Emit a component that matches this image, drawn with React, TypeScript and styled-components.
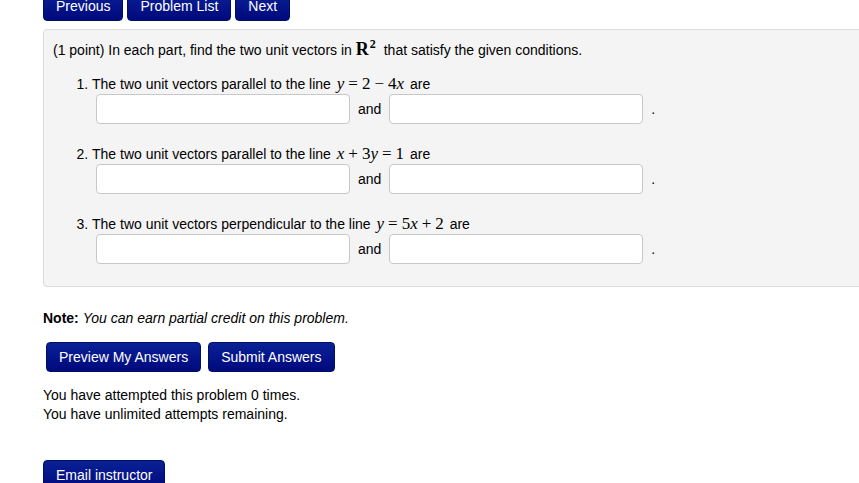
import React from 'react';
import styled, { createGlobalStyle } from 'styled-components';

const GlobalStyle = createGlobalStyle`
  html, body {
    margin: 0;
    padding: 0;
    background: #fff;
    overflow: hidden;
  }
  body {
    font-family: "Liberation Sans", Arial, sans-serif;
    font-size: 14px;
    color: #000;
  }
`;

const Page = styled.div`
  width: 859px;
  height: 483px;
  overflow: hidden;
  padding-left: 43px;
  box-sizing: border-box;
`;

const NavRow = styled.div`
  display: flex;
  gap: 4px;
  margin-top: -9px;
`;

const Button = styled.button<{ $ml?: number }>`
  height: 30px;
  padding: 0 12px;
  margin-left: ${(p) => p.$ml ?? 0}px;
  border: 1px solid #00105e;
  border-radius: 4px;
  background: linear-gradient(#0a2196, #00097d);
  color: #fff;
  font-family: "Liberation Sans", Arial, sans-serif;
  font-size: 14px;
  line-height: 28px;
  cursor: pointer;
  white-space: nowrap;
`;

const ProblemBox = styled.div`
  margin-top: 8px;
  width: 840px;
  background: #f4f4f4;
  border: 1px solid #dcdcdc;
  border-radius: 4px;
  padding: 10px 0 22px 9px;
  box-sizing: border-box;
`;

const Intro = styled.div`
  line-height: 20px;
  height: 20px;
`;

const List = styled.ol`
  margin: 15px 0 0 0;
  padding-left: 39px;
`;

const Item = styled.li`
  line-height: 19px;
  margin-bottom: 21px;
  &:last-child {
    margin-bottom: 0;
  }
`;

const ItemText = styled.div`
  height: 19px;
`;

const AnswerRow = styled.div`
  display: flex;
  align-items: baseline;
  gap: 8px;
  margin-left: 4px;
`;

const AnswerInput = styled.input`
  width: 254px;
  height: 30px;
  box-sizing: border-box;
  border: 1px solid #c8c8c8;
  border-radius: 4px;
  background: #fff;
  font-family: "Liberation Sans", Arial, sans-serif;
  font-size: 14px;
  padding: 0 6px;
`;

const Math = styled.span`
  font-family: "Liberation Serif", "Times New Roman", serif;
  font-size: 17px;
  line-height: 1;
  margin: 0 2px;
`;

const MathVar = styled.i`
  font-family: "Liberation Serif", "Times New Roman", serif;
`;

const MathOp = styled.span`
  margin: 0 4px;
`;

const BoldR = styled.b`
  font-family: "Liberation Serif", "Times New Roman", serif;
  font-size: 18px;
  line-height: 1;
  margin: 0 4px 0 4px;
`;

const Sup = styled.sup`
  font-size: 12px;
  vertical-align: 7px;
  line-height: 0;
  margin-left: 1px;
`;

const Note = styled.div`
  margin-top: 21px;
  line-height: 20px;
`;

const ActionRow = styled.div`
  display: flex;
  gap: 7px;
  margin-top: 14px;
`;

const Attempts = styled.div`
  margin-top: 14px;
  line-height: 19px;
`;

const EmailRow = styled.div`
  margin-top: 36px;
`;

function Answer() {
  return (
    <AnswerRow>
      <AnswerInput type="text" />
      <span>and</span>
      <AnswerInput type="text" />
      <span>.</span>
    </AnswerRow>
  );
}

export default function App() {
  return (
    <>
      <GlobalStyle />
      <Page>
        <NavRow>
          <Button>Previous</Button>
          <Button>Problem List</Button>
          <Button>Next</Button>
        </NavRow>

        <ProblemBox>
          <Intro>
            (1 point) In each part, find the two unit vectors in
            <BoldR>
              R<Sup>2</Sup>
            </BoldR>{' '}
            that satisfy the given conditions.
          </Intro>
          <List>
            <Item>
              <ItemText>
                The two unit vectors parallel to the line{' '}
                <Math>
                  <MathVar>y</MathVar>
                  <MathOp>=</MathOp>2<MathOp>−</MathOp>4<MathVar>x</MathVar>
                </Math>{' '}
                are
              </ItemText>
              <Answer />
            </Item>
            <Item>
              <ItemText>
                The two unit vectors parallel to the line{' '}
                <Math>
                  <MathVar>x</MathVar>
                  <MathOp>+</MathOp>3<MathVar>y</MathVar>
                  <MathOp>=</MathOp>1
                </Math>{' '}
                are
              </ItemText>
              <Answer />
            </Item>
            <Item>
              <ItemText>
                The two unit vectors perpendicular to the line{' '}
                <Math>
                  <MathVar>y</MathVar>
                  <MathOp>=</MathOp>5<MathVar>x</MathVar>
                  <MathOp>+</MathOp>2
                </Math>{' '}
                are
              </ItemText>
              <Answer />
            </Item>
          </List>
        </ProblemBox>

        <Note>
          <b>Note:</b> <i>You can earn partial credit on this problem.</i>
        </Note>

        <ActionRow>
          <Button $ml={3}>Preview My Answers</Button>
          <Button>Submit Answers</Button>
        </ActionRow>

        <Attempts>
          You have attempted this problem 0 times.
          <br />
          You have unlimited attempts remaining.
        </Attempts>

        <EmailRow>
          <Button>Email instructor</Button>
        </EmailRow>
      </Page>
    </>
  );
}
